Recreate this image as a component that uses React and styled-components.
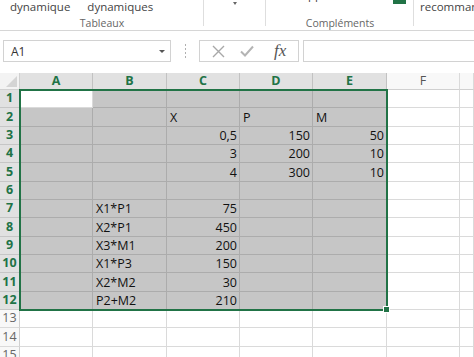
import React from "react"
import styled, { createGlobalStyle } from "styled-components"

const GREEN = "#217346"

const Global = createGlobalStyle`
  body {
    margin: 0;
    background: #ffffff;
    overflow: hidden;
    font-family: "Open Sans", "Liberation Sans", sans-serif;
  }
`

const Page = styled.div`
  width: 474px;
  height: 357px;
  overflow: hidden;
  display: flex;
  flex-direction: column;
`

const Ribbon = styled.div`
  height: 30px;
  display: flex;
  border-bottom: 1px solid #d6d6d6;
  overflow: hidden;
  flex-shrink: 0;
`

const Group = styled.div`
  width: ${(p) => p.$w}px;
  flex-shrink: 0;
  display: flex;
  flex-direction: column;
  position: relative;
  &::after {
    content: "";
    position: absolute;
    right: 0;
    top: 0;
    height: 26px;
    border-right: 1px solid #dedede;
  }
`

const GroupButtons = styled.div`
  height: 17px;
  display: flex;
  align-items: flex-start;
  padding-left: ${(p) => p.$pad || 0}px;
  gap: ${(p) => p.$gap || 0}px;
  justify-content: ${(p) => (p.$center ? "center" : "flex-start")};
`

const ButtonText = styled.span`
  font-size: 11.5px;
  line-height: 12px;
  margin-top: 1px;
  color: #444444;
  white-space: nowrap;
`

const GroupLabel = styled.div`
  height: 13px;
  font-size: 10.5px;
  line-height: 12px;
  color: #666666;
  text-align: center;
`

const TinyArrow = styled.div`
  width: 0;
  height: 0;
  border-left: 2.5px solid transparent;
  border-right: 2.5px solid transparent;
  border-top: 3px solid #666;
  margin-top: 2px;
`

const Descender = styled.span`
  font-size: 11.5px;
  color: #444;
  line-height: 12px;
  margin-top: -11px;
`

const GreenIcon = styled.div`
  width: 13px;
  height: 4px;
  background: ${GREEN};
  margin-left: ${(p) => p.$left}px;
`

const FormulaBar = styled.div`
  margin-top: 9px;
  height: 22px;
  display: flex;
  align-items: stretch;
  padding-left: 3px;
  flex-shrink: 0;
`

const NameBox = styled.div`
  width: 168px;
  box-sizing: border-box;
  border: 1px solid #d2d2d2;
  display: flex;
  align-items: center;
  justify-content: space-between;
  padding: 0 5px 0 7px;
  font-size: 12px;
  color: #333;
`

const DropArrow = styled.div`
  width: 0;
  height: 0;
  border-left: 3px solid transparent;
  border-right: 3px solid transparent;
  border-top: 3px solid #555;
`

const Grip = styled.div`
  width: 28px;
  display: flex;
  flex-direction: column;
  align-items: center;
  justify-content: center;
  gap: 2px;
  span {
    width: 1px;
    height: 2px;
    background: #b0b0b0;
  }
`

const FxBox = styled.div`
  width: 100px;
  box-sizing: border-box;
  border: 1px solid #d2d2d2;
  display: flex;
  align-items: center;
  padding-left: 12px;
  gap: 15px;
`

const Fx = styled.span`
  font-family: "Liberation Serif", "DejaVu Serif", serif;
  font-style: italic;
  font-size: 17px;
  color: #555;
  margin-left: 5px;
  line-height: 18px;
`

const FormulaInput = styled.div`
  flex: 1;
  margin-left: 4px;
  border: 1px solid #d2d2d2;
  border-right: none;
`

const Sheet = styled.div`
  margin-top: 11px;
  display: grid;
  grid-template-columns: 20px 73px 74px 73px 73px 74px 73px 1fr;
  grid-template-rows: 17px 18px 19px 18px 18px 19px 18px 18px 19px 18px 18px 19px 18px 18px 19px 18px;
`

const Placed = styled.div`
  grid-row: ${(p) => p.$r + 1};
  grid-column: ${(p) => p.$c + 1};
  box-sizing: border-box;
`

const Corner = styled(Placed)`
  background: #f3f3f3;
  border-right: 1px solid #d0d0d0;
  border-bottom: 1px solid #d0d0d0;
  position: relative;
  &::after {
    content: "";
    position: absolute;
    right: 2px;
    bottom: 2px;
    width: 0;
    height: 0;
    border-left: 11px solid transparent;
    border-bottom: 11px solid #d4d4d4;
  }
`

const ColHead = styled(Placed)`
  background: ${(p) => (p.$sel ? "#e1e1e1" : "#f8f8f8")};
  color: ${(p) => (p.$sel ? GREEN : "#555")};
  font-weight: ${(p) => (p.$sel ? 700 : 400)};
  border-right: 1px solid ${(p) => (p.$sel ? "#c2c2c2" : "#dadada")};
  border-bottom: 1px solid ${(p) => (p.$sel ? GREEN : "#d0d0d0")};
  font-size: 12.5px;
  display: flex;
  align-items: center;
  justify-content: center;
  line-height: 1;
`

const RowHead = styled(Placed)`
  background: ${(p) => (p.$sel ? "#e1e1e1" : "#f8f8f8")};
  color: ${(p) => (p.$sel ? GREEN : "#666")};
  font-weight: ${(p) => (p.$sel ? 700 : 400)};
  border-bottom: 1px solid ${(p) => (p.$sel ? "#c6c6c6" : "#dadada")};
  border-right: 1px solid ${(p) => (p.$sel ? GREEN : "#d0d0d0")};
  font-size: 12.5px;
  display: flex;
  align-items: center;
  justify-content: center;
  line-height: 1;
`

const Cell = styled(Placed)`
  background: ${(p) => (p.$sel ? "#c6c6c6" : "#ffffff")};
  border-right: 1px solid ${(p) => (p.$sel ? "#acacac" : "#dadada")};
  border-bottom: 1px solid ${(p) => (p.$sel ? "#acacac" : "#dadada")};
  font-size: 12.5px;
  color: #111;
  display: flex;
  align-items: flex-end;
  justify-content: ${(p) => (p.$num ? "flex-end" : "flex-start")};
  padding: 0 2px 0 3px;
  line-height: 16px;
  white-space: nowrap;
  overflow: hidden;
`

const Selection = styled.div`
  grid-column: 2 / 7;
  grid-row: 2 / 14;
  margin: -1px -1px -1px -1px;
  border: 2px solid ${GREEN};
  position: relative;
  pointer-events: none;
  z-index: 2;
`

const FillHandle = styled.div`
  position: absolute;
  right: -4px;
  bottom: -4px;
  width: 5px;
  height: 5px;
  background: ${GREEN};
  border: 1px solid #ffffff;
`

const cols = ["A", "B", "C", "D", "E", "F", ""]

const data = {
  2: { C: "X", D: "P", E: "M" },
  3: { C: "0,5", D: "150", E: "50" },
  4: { C: "3", D: "200", E: "10" },
  5: { C: "4", D: "300", E: "10" },
  7: { B: "X1*P1", C: "75" },
  8: { B: "X2*P1", C: "450" },
  9: { B: "X3*M1", C: "200" },
  10: { B: "X1*P3", C: "150" },
  11: { B: "X2*M2", C: "30" },
  12: { B: "P2+M2", C: "210" },
}

function CrossIcon() {
  return (
    <svg width="13" height="13" viewBox="0 0 13 13">
      <path d="M1 1 L12 12 M12 1 L1 12" stroke="#a8a8a8" strokeWidth="1.4" fill="none" />
    </svg>
  )
}

function CheckIcon() {
  return (
    <svg width="14" height="12" viewBox="0 0 14 12">
      <path d="M1 6.5 L5 10.5 L13 1.5" stroke="#b4b4b4" strokeWidth="2" fill="none" />
    </svg>
  )
}

export default function App() {
  const rows = []
  for (let r = 1; r <= 15; r++) rows.push(r)

  return (
    <Page>
      <Global />
      <Ribbon>
        <Group $w={204}>
          <GroupButtons $pad={10} $gap={17}>
            <ButtonText>dynamique</ButtonText>
            <ButtonText>dynamiques</ButtonText>
          </GroupButtons>
          <GroupLabel>Tableaux</GroupLabel>
        </Group>
        <Group $w={62}>
          <GroupButtons $center>
            <TinyArrow />
          </GroupButtons>
          <GroupLabel></GroupLabel>
        </Group>
        <Group $w={148}>
          <GroupButtons $pad={42}>
            <Descender>pp</Descender>
            <GreenIcon $left={71} />
          </GroupButtons>
          <GroupLabel>Compléments</GroupLabel>
        </Group>
        <Group $w={70}>
          <GroupButtons $pad={6}>
            <ButtonText>recomman-</ButtonText>
          </GroupButtons>
          <GroupLabel></GroupLabel>
        </Group>
      </Ribbon>

      <FormulaBar>
        <NameBox>
          <span>A1</span>
          <DropArrow />
        </NameBox>
        <Grip>
          <span />
          <span />
          <span />
          <span />
        </Grip>
        <FxBox>
          <CrossIcon />
          <CheckIcon />
          <Fx>fx</Fx>
        </FxBox>
        <FormulaInput />
      </FormulaBar>

      <Sheet>
        <Corner $r={0} $c={0} />
        {cols.map((c, i) => (
          <ColHead key={"h" + i} $r={0} $c={i + 1} $sel={i < 5}>
            {c}
          </ColHead>
        ))}
        {rows.map((r) => {
          const sel = r <= 12
          return (
            <React.Fragment key={r}>
              <RowHead $r={r} $c={0} $sel={sel}>
                {r}
              </RowHead>
              {cols.map((c, i) => {
                const v = data[r] && data[r][c]
                const inSel = sel && i < 5 && !(r === 1 && c === "A")
                const num = v !== undefined && /^[0-9,]+$/.test(v)
                return (
                  <Cell key={c + i} $r={r} $c={i + 1} $sel={inSel} $num={num}>
                    {v}
                  </Cell>
                )
              })}
            </React.Fragment>
          )
        })}
        <Selection>
          <FillHandle />
        </Selection>
      </Sheet>
    </Page>
  )
}
